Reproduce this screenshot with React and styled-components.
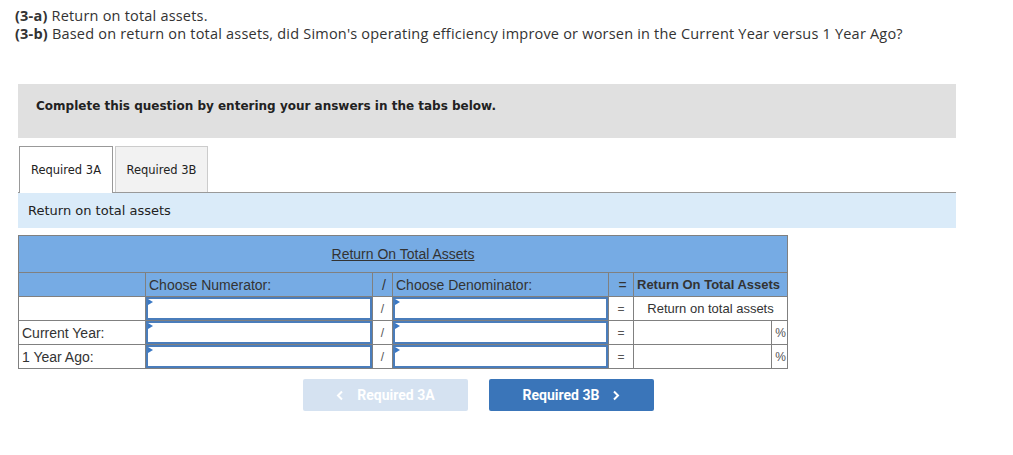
import React from 'react'
import styled, { createGlobalStyle } from 'styled-components'

const GlobalStyle = createGlobalStyle`
  body {
    margin: 0;
    background: #fff;
  }
`

const Page = styled.div`
  padding: 7px 57px 0 18px;
  width: 938px;
`

const Intro = styled.div`
  font-family: "Open Sans", Lato, sans-serif;
  font-size: 14.5px;
  letter-spacing: 0.2px;
  line-height: 18px;
  color: #333;
  margin-left: -3px;
  white-space: nowrap;
  b {
    font-weight: 700;
  }
`

const Notice = styled.div`
  margin-top: 41px;
  height: 54px;
  box-sizing: border-box;
  background: #e0e0e0;
  padding: 14px 0 0 18px;
  font-family: "DejaVu Sans", Verdana, sans-serif;
  font-weight: bold;
  font-size: 12px;
  line-height: 16px;
  color: #222;
`

const Tabs = styled.div`
  margin-top: 8px;
  display: flex;
  gap: 2px;
  padding-left: 1px;
  border-bottom: 1px solid #999;
`

const Tab = styled.div`
  width: ${p => (p.active ? '94px' : '93px')};
  box-sizing: border-box;
  display: flex;
  align-items: center;
  justify-content: center;
  font-family: "DejaVu Sans", Verdana, sans-serif;
  font-size: 11.5px;
  color: #222;
  background: ${p => (p.active ? '#fff' : '#f2f2f2')};
  border: 1px solid ${p => (p.active ? '#999' : '#ccc')};
  border-bottom: none;
  margin-bottom: ${p => (p.active ? '-1px' : '0')};
  height: ${p => (p.active ? '47px' : '46px')};
`

const InfoBar = styled.div`
  height: 35px;
  background: #daebf9;
  display: flex;
  align-items: center;
  padding-left: 10px;
  font-family: "DejaVu Sans", Verdana, sans-serif;
  font-size: 13px;
  color: #222;
`

const Table = styled.table`
  margin-top: 7px;
  border-collapse: collapse;
  width: 769px;
  table-layout: fixed;
  font-family: "Liberation Sans", Arial, sans-serif;
  font-size: 14px;
  color: #333;
  td {
    border: 1px solid #808080;
    padding: 0;
    height: 23px;
  }
`

const TitleCell = styled.td`
  && {
    height: 36px;
  }
  background: #76abe4;
  text-align: center;
  vertical-align: middle;
  span {
    text-decoration: underline;
  }
`

const HeadCell = styled.td`
  background: #76abe4;
  padding-left: 3px !important;
  text-align: ${p => (p.center ? 'center' : 'left')};
  font-weight: ${p => (p.bold ? 'bold' : 'normal')};
  font-size: ${p => (p.bold ? '13px' : '14px')};
`

const LabelCell = styled.td`
  padding-left: 3px !important;
`

const OpCell = styled.td`
  text-align: center;
  color: #555;
  font-size: 12px;
`

const Field = styled.div`
  box-sizing: border-box;
  height: 23px;
  border: 2px solid #4a7dbb;
  background: #fff;
  position: relative;
  &::before {
    content: '';
    position: absolute;
    top: 0;
    left: 0;
    border-left: 5px solid #3a78c4;
    border-top: 3px solid transparent;
    border-bottom: 3px solid transparent;
  }
`

const ResultNote = styled.td`
  text-align: center;
  color: #333;
  font-size: 13px;
`

const PctCell = styled.td`
  text-align: right;
  color: #555;
  font-size: 12px;
  padding-right: 1px !important;
`

const Nav = styled.div`
  margin-top: 10px;
  display: flex;
  gap: 21px;
  padding-left: 285px;
`

const NavButton = styled.button`
  width: 165px;
  height: 32px;
  border: none;
  border-radius: 2px;
  background: ${p => (p.disabled ? '#d5e2f1' : '#3a75b9')};
  color: #fff;
  font-family: Roboto, "Liberation Sans", sans-serif;
  font-weight: bold;
  font-size: 14px;
  display: flex;
  align-items: center;
  justify-content: center;
  gap: 13px;
  cursor: pointer;
`

const Chevron = ({ dir }) => (
  <svg width="8" height="11" viewBox="0 0 8 11">
    <path
      d={dir === 'left' ? 'M6 1.5 L2 5.5 L6 9.5' : 'M2 1.5 L6 5.5 L2 9.5'}
      fill="none"
      stroke="#fff"
      strokeWidth="2"
    />
  </svg>
)

const rows = [
  { label: '', result: 'note' },
  { label: 'Current Year:', result: 'pct' },
  { label: '1 Year Ago:', result: 'pct' },
]

export default function App() {
  return (
    <>
      <GlobalStyle />
      <Page>
        <Intro>
          <div><b>(3-a)</b> Return on total assets.</div>
          <div><b>(3-b)</b> Based on return on total assets, did Simon's operating efficiency improve or worsen in the Current Year versus 1 Year Ago?</div>
        </Intro>
        <Notice>Complete this question by entering your answers in the tabs below.</Notice>
        <Tabs>
          <Tab active>Required 3A</Tab>
          <Tab>Required 3B</Tab>
        </Tabs>
        <InfoBar>Return on total assets</InfoBar>
        <Table>
          <colgroup>
            <col style={{ width: 127 }} />
            <col style={{ width: 227 }} />
            <col style={{ width: 20 }} />
            <col style={{ width: 216 }} />
            <col style={{ width: 25 }} />
            <col style={{ width: 138 }} />
            <col style={{ width: 16 }} />
          </colgroup>
          <tbody>
            <tr>
              <TitleCell colSpan={7}><span>Return On Total Assets</span></TitleCell>
            </tr>
            <tr>
              <HeadCell />
              <HeadCell>Choose Numerator:</HeadCell>
              <HeadCell center>/</HeadCell>
              <HeadCell>Choose Denominator:</HeadCell>
              <HeadCell center>=</HeadCell>
              <HeadCell colSpan={2} bold>Return On Total Assets</HeadCell>
            </tr>
            {rows.map((r, i) => (
              <tr key={i}>
                <LabelCell>{r.label}</LabelCell>
                <td><Field /></td>
                <OpCell>/</OpCell>
                <td><Field /></td>
                <OpCell>=</OpCell>
                {r.result === 'note' ? (
                  <ResultNote colSpan={2}>Return on total assets</ResultNote>
                ) : (
                  <>
                    <td />
                    <PctCell>%</PctCell>
                  </>
                )}
              </tr>
            ))}
          </tbody>
        </Table>
        <Nav>
          <NavButton disabled><Chevron dir="left" /> Required 3A</NavButton>
          <NavButton>Required 3B <Chevron dir="right" /></NavButton>
        </Nav>
      </Page>
    </>
  )
}
